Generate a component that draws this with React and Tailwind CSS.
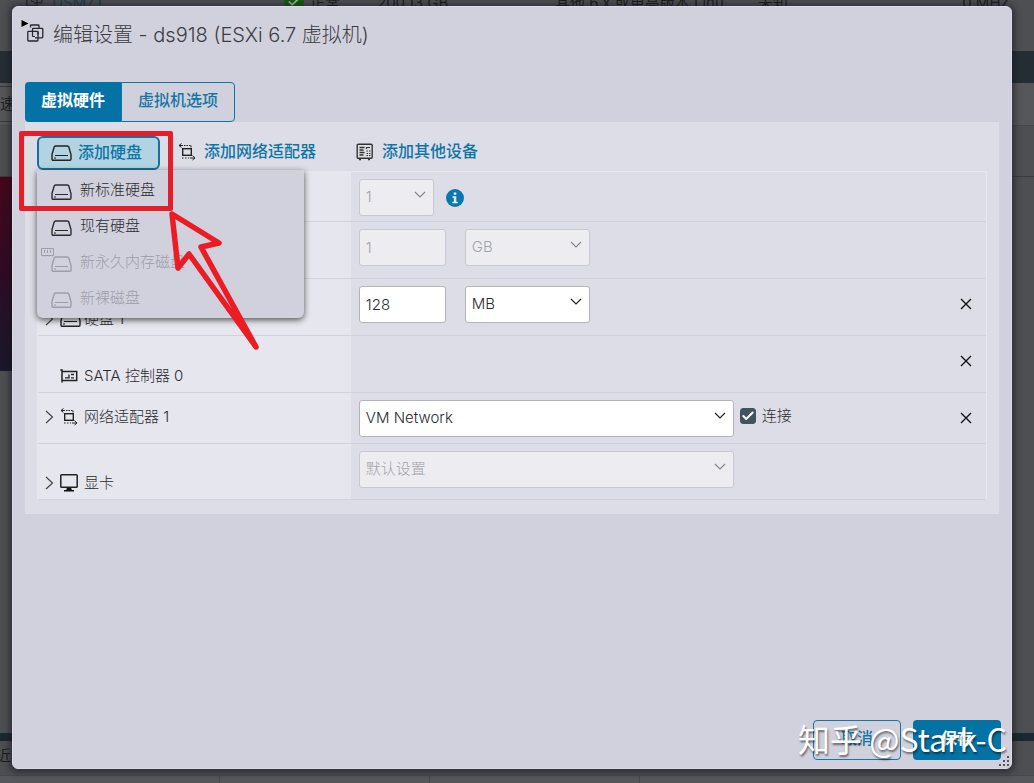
import React, { useState } from 'react';
import { Check } from 'lucide-react';

const DiskIcon = ({ className = '' }) => (
  <svg width="21" height="16" viewBox="0 0 21 16" fill="none" stroke="currentColor" strokeWidth="1.4" className={`shrink-0 ${className}`}>
    <path d="M1 9.500 3.200 2Q3.500 1 4.500 1H16.500Q17.500 1 17.800 2L20 9.500V14Q20 15.200 18.800 15.200H2.200Q1 15.200 1 14Z" />
    <path d="M4 10.500H17M3 13H5" strokeWidth="1" />
  </svg>
);

const NetworkIcon = () => (
  <svg width="18" height="18" viewBox="0 0 18 18" fill="none" stroke="#222" className="shrink-0">
    <rect x="4.700" y="5.700" width="8.600" height="6.600" strokeWidth="1.400" />
    <path d="M3.500.5 1 2.500l2.500 2M14.500 12.500l2.500 2.500-2.500 2" />
    <path d="M1 2.500H5M6 2.500h1.500M8.500 2.500h1.500M11 2.500h1.500M13 2.500v2M4 15h1.500M7 15h1.500M10 15h1M12 15h5" />
  </svg>
);

const DeviceIcon = () => (
  <svg width="18" height="18" viewBox="0 0 18 18" fill="none" stroke="#333" className="shrink-0">
    <rect x="1.2" y="1.2" width="15" height="14" rx="1" strokeWidth="1.4" />
    <path d="M3 16.5h2M12 16.5h2" strokeWidth="1.4" />
    <path d="M3.500 4.500h5M3.500 7h4M3.500 9.500h5M3.500 12h4" strokeWidth="1.400" />
    <path d="M10.500 6V4.500H14M10.500 8h1.500M13 8h1.500M10.500 10.500h1.500M13 10.500h1.500M10.500 12.500h1.500M13 12.500h1.500" strokeWidth="1.200" />
  </svg>
);

const ControllerIcon = () => (
  <svg width="18" height="14" viewBox="0 0 18 14" fill="none" stroke="#222" className="shrink-0">
    <path d="M.3 1H2v12.500M2 2.600h14.700v9H2" strokeWidth="1.500" />
    <path d="M5 8.800h4V5.500M11 5.500h3M11 8.800h3" strokeWidth="1.300" />
  </svg>
);

const MonitorIcon = () => (
  <svg width="18" height="18" viewBox="0 0 18 18" className="shrink-0">
    <rect x=".8" y=".8" width="16.4" height="12.4" rx=".8" fill="none" stroke="#222" strokeWidth="1.5" />
    <path d="M6.8 14h4.4l.6 2H14v1.6H4V16h2.2z" fill="#111" />
  </svg>
);

const VmIcon = ({ running }) => (
  <svg width="24" height="24" viewBox="0 0 24 24" fill="none" stroke="#26272c" strokeWidth="1.3" className="shrink-0">
    {running && <path d="M.5 1v7l7-3.5z" fill="#000" stroke="none" />}
    <path d="M9.500 8.500V6.800Q9.500 6 10.300 6H17.200Q18 6 18 6.800V9" />
    <path d="M11.500 12V10Q11.500 9.300 12.200 9.300H21Q21.800 9.300 21.800 10.100V18Q21.800 18.800 21 18.800H14" />
    <rect x="6.800" y="12.300" width="10.200" height="9.700" rx=".8" />
    <path d="M11.500 12.500V17.500M17 12.500V15.500M11.500 17.500H14" strokeWidth="1.2" />
  </svg>
);

const ChevronIcon = ({ className = '' }) => (
  <svg width="12" height="7" viewBox="0 0 12 7" fill="none" stroke="currentColor" strokeWidth="1.2" className={className}>
    <path d="m1 1 5 5 5-5" />
  </svg>
);

const Select = ({ label, value, width, disabled }) => (
  <div className={`relative shrink-0 ${width} ${disabled ? 'text-[#a3a3aa]' : 'text-[#2b2b2e]'}`}>
    <select
      aria-label={label}
      disabled={disabled}
      defaultValue={value}
      className={`block h-[37px] w-full appearance-none rounded-[3px] border pl-1.5 pr-8 text-[15px] font-light opacity-100 ${disabled ? 'border-[#c8c8ce] bg-[#ededf1]' : 'border-[#b3b3b9] bg-white'}`}
    >
      <option>{value}</option>
    </select>
    <ChevronIcon className={`pointer-events-none absolute right-2 top-3 ${disabled ? 'text-[#85858b]' : 'text-[#222]'}`} />
  </div>
);

const NumberBox = ({ label, value, disabled }) => (
  <input
    type="text"
    aria-label={label}
    defaultValue={value}
    disabled={disabled}
    className={`h-[37px] w-[87px] rounded-[3px] border px-1.5 text-[15px] font-light ${disabled ? 'border-[#c8c8ce] bg-[#ededf1] text-[#a3a3aa]' : 'border-[#b3b3b9] bg-white text-[#2b2b2e]'}`}
  />
);

const RemoveButton = () => (
  <button type="button" aria-label="移除" className="ml-auto flex h-9 items-center">
    <svg width="12" height="12" viewBox="0 0 12 12" stroke="#111" strokeWidth="1.4">
      <path d="m1 1 10 10M11 1 1 11" />
    </svg>
  </button>
);

const Row = ({ icon, label, expandable, height, align = 'items-end pb-1.5', removable, children }) => (
  <div className={`flex border-b border-[#d2d2dc] ${height}`}>
    <div className={`flex w-[33%] shrink-0 bg-[#e6e6ee] pl-[7px] ${align}`}>
      {label && (
        <div className="flex h-6 items-center text-[15px] font-light text-[#2b2b2e]">
          <span className="w-[15px]">
            {expandable && (
              <button type="button" aria-label={`展开 ${label}`} className="flex">
                <svg width="9" height="14" viewBox="0 0 9 14" fill="none" stroke="#444" strokeWidth="1.2">
                  <path d="m1 1 6.500 6-6.500 6" />
                </svg>
              </button>
            )}
          </span>
          <span className="flex w-6">{icon}</span>
          <span>{label}</span>
        </div>
      )}
    </div>
    <div className="flex flex-1 items-start pl-2 pr-3.5 pt-[7px]">
      {children}
      {removable && <RemoveButton />}
    </div>
  </div>
);

const menuItems = [
  { name: '新标准硬盘' },
  { name: '现有硬盘' },
  { name: '新永久内存磁盘', disabled: true, memory: true },
  { name: '新裸磁盘', disabled: true },
];

const DiskMenu = () => (
  <div className="absolute left-0 top-full z-10 w-[267px] rounded-b-md bg-[#d1d1de] pb-0.5 pt-0.5 shadow-[0_2px_6px_rgba(0,0,0,0.65)]">
    {menuItems.map((item) => (
      <button
        key={item.name}
        type="button"
        disabled={item.disabled}
        className={`relative flex h-9 w-full items-center gap-2 pl-3.5 text-[15px] font-light ${item.disabled ? 'text-[#9d9da8]' : 'text-[#2b2b2e]'}`}
      >
        {item.memory && (
          <svg width="13" height="9" viewBox="0 0 13 9" fill="none" stroke="currentColor" className="absolute left-1 top-1">
            <path d="M.5.5h12v7H.5zM3.500 2v3M6.500 2v3M9.500 2v3M2 7v1.500M5 7v1.500M8 7v1.500M11 7v1.500" />
          </svg>
        )}
        <DiskIcon className="relative top-0.5" />
        {item.name}
      </button>
    ))}
  </div>
);

const Background = () => (
  <div className="flex min-h-screen flex-col bg-[#4e4f53] text-[15px] text-[#1d1e20]">
    <div className="flex h-[51px] items-start overflow-hidden whitespace-nowrap leading-[6px]">
      <div className="flex w-[284px] shrink-0 gap-2 pl-5">
        <span className="-mt-4"><VmIcon /></span>
        <a href="#dsm" className="text-[#1c3f50]">DSM7.1</a>
      </div>
      <div className="flex w-[93px] shrink-0 gap-1.5">
        <span className="-mt-2 flex h-5 w-5 items-center justify-center rounded-full bg-[#175c10] text-[#a5b5a2]"><Check size={14} strokeWidth={3} /></span>
        正常
      </div>
      <div className="w-[178px] shrink-0">200.13 GB</div>
      <div className="w-[203px] shrink-0">其他 6.x 或更高版本 Linu</div>
      <div className="flex-1">未知</div>
      <div className="pr-6">0 MHZ</div>
    </div>
    <div className="h-8 bg-[#252d34]" />
    <div className="flex h-[42px] items-center bg-[#56575a]">
      <div className="flex h-9 w-40 items-center border-y border-[#37383b]">速</div>
    </div>
    <div className="h-[52px] border-b border-t border-b-[#3a3b3f] border-t-[#47484c]" />
    <div className="h-[194px] w-40 bg-linear-to-b from-[#45061a] via-[#2f0a25] to-[#19182a]" />
    <div className="flex-1" />
    <div className="h-2 bg-[#1c282f]" />
    <div className="-ml-1 h-[34px] pt-1">近期</div>
    <div className="flex h-2 border-t border-[#47484c] bg-[#56575a]">
      <div className="w-[220px] border-r border-[#48494c]" />
      <div className="w-[210px] border-r border-[#48494c]" />
      <div className="w-[210px] border-r border-[#48494c]" />
    </div>
  </div>
);

const App = () => {
  const [menuOpen, setMenuOpen] = useState(true);
  const [connected, setConnected] = useState(true);

  return (
    <div className="relative overflow-hidden font-['Inter','Noto_Sans_CJK_SC',sans-serif]">
      <Background />
      <div className="absolute inset-0 flex pb-3.5 pl-3 pr-[22px] pt-1.5">
        <div role="dialog" className="relative flex flex-1 flex-col rounded-md border border-[#dcdce6] bg-[#d1d1de] px-3 shadow-[0_1px_6px_3px_rgba(20,20,30,0.5)]">
          <header className="flex h-[75px] items-start">
            <div className="-ml-1 mt-3"><VmIcon running /></div>
            <h1 className="ml-2 mt-3 text-[20px] font-light leading-8 text-[#3c3c42]">编辑设置 - ds918 (ESXi 6.7 虚拟机)</h1>
          </header>

          <div role="tablist" className="flex h-10 text-[16px]">
            <button role="tab" aria-selected="true" type="button" className="rounded-l bg-[#0472a5] px-4 pb-1 font-bold text-white">虚拟硬件</button>
            <button role="tab" aria-selected="false" type="button" className="rounded-r border border-[#0f75a5] px-4 pb-1 font-medium text-[#1577a5]">虚拟机选项</button>
          </div>

          <div className="bg-[#dddde7] px-3 pb-3.5 pt-3.5">
            <div className="flex text-[16px] font-medium leading-6 text-[#0d76a6]">
              <div className="relative">
                <button
                  type="button"
                  onClick={() => setMenuOpen(!menuOpen)}
                  className="flex h-[34px] items-center gap-1.5 rounded-md border-2 border-[#17719c] bg-[#b1d3e2] pl-3 pr-4"
                >
                  <DiskIcon className="text-[#222]" />
                  <span className="pb-0.5">添加硬盘</span>
                </button>
                {menuOpen && <DiskMenu />}
              </div>
              <button type="button" className="ml-[18px] flex h-8 items-center gap-2"><NetworkIcon /><span className="pb-0.5">添加网络适配器</span></button>
              <button type="button" className="ml-10 flex h-8 items-center gap-2"><DeviceIcon /><span className="pb-0.5">添加其他设备</span></button>
            </div>

            <div className="mt-px border-l border-r border-t border-[#e6e6ee]">
              <Row height="min-h-[50px]">
                <Select label="CPU" value="1" width="w-[75px]" disabled />
                <svg width="18" height="18" viewBox="0 0 18 18" className="ml-3 mt-2.5">
                  <circle cx="9" cy="9" r="9" fill="#0c77ae" />
                  <path d="M7.700 3.500h2.600v2.300H7.700zM6.500 7.200h3.800v5.500h1.400v1.500H6.400v-1.500h1.400v-4H6.500z" fill="#e8f1f7" />
                </svg>
              </Row>
              <Row height="min-h-[57px]">
                <NumberBox label="内存" value="1" disabled />
                <span className="w-[19px]" />
                <Select label="内存单位" value="GB" width="w-[125px]" disabled />
              </Row>
              <Row height="min-h-[57px]" icon={<DiskIcon className="text-[#222]" />} label="硬盘 1" expandable removable align="items-end pb-1">
                <NumberBox label="硬盘大小" value="128" />
                <span className="w-[19px]" />
                <Select label="硬盘单位" value="MB" width="w-[125px]" />
              </Row>
              <Row height="min-h-[57px]" icon={<ControllerIcon />} label="SATA 控制器 0" removable align="items-end pb-1" />
              <Row height="min-h-[51px]" icon={<NetworkIcon />} label="网络适配器 1" expandable removable align="items-start pt-3">
                <Select label="网络" value="VM Network" width="w-[375px]" />
                <label className="ml-1.5 flex h-8 items-center gap-1.5 text-[15px] font-light text-[#2b2b2e]">
                  <span className="relative flex h-4 w-4">
                    <input type="checkbox" checked={connected} onChange={(e) => setConnected(e.target.checked)} className="h-4 w-4 appearance-none rounded-[3px] border border-[#40535f] checked:bg-[#40535f]" />
                    {connected && <Check size={14} strokeWidth={3.5} className="pointer-events-none absolute left-px top-px text-white" />}
                  </span>
                  连接
                </label>
              </Row>
              <Row height="min-h-[56px]" icon={<MonitorIcon />} label="显卡" expandable align="items-end pb-1">
                <Select label="显卡设置" value="默认设置" width="w-[375px]" disabled />
              </Row>
            </div>
          </div>

          <footer className="-mr-0.5 mt-auto flex justify-end gap-3 pb-2 text-[16px]">
            <button type="button" className="h-10 w-[88px] rounded border border-[#1577a5] pb-1 font-medium text-[#1577a5]">取消</button>
            <button type="button" className="h-10 w-[88px] rounded bg-[#0472a5] pb-1 font-bold text-white">保存</button>
          </footer>
          <svg width="10" height="10" viewBox="0 0 10 10" fill="#55555c" className="absolute bottom-0.5 right-0.5">
            <path d="M8 0h2v2H8zM4 4h2v2H4zM8 4h2v2H8zM0 8h2v2H0zM4 8h2v2H4zM8 8h2v2H8z" />
          </svg>

          {/* annotations */}
          <div className="pointer-events-none absolute left-1.5 top-[124px] z-20 h-20 w-[154px] rounded-xs border-[5px] border-[#e21f2b]" />
          <svg width="96" height="146" viewBox="0 0 96 146" fill="none" stroke="#ec1c24" strokeWidth="5.5" strokeLinejoin="round" className="pointer-events-none absolute left-[153px] top-[200px] z-20">
            <path d="M6 7 53 36 35 40 90 140 23 47 12 61Z" />
          </svg>
          <div className="pointer-events-none absolute bottom-1.5 right-1 z-20 whitespace-nowrap font-['Noto_Sans_CJK_SC',sans-serif] text-[32px] leading-[48px] text-white [text-shadow:1px_2px_2px_rgba(0,0,0,0.5)]">
            知乎 @Stark-C
          </div>
        </div>
      </div>
    </div>
  );
};

export default App;
